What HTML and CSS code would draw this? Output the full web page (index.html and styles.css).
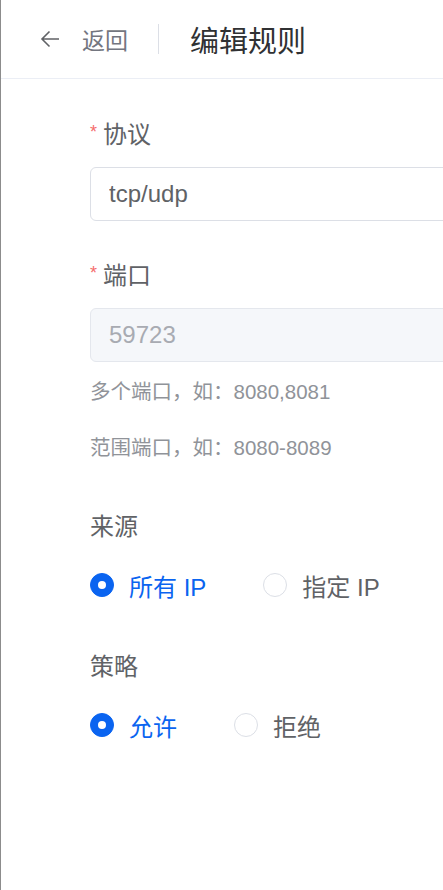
FILE: index.html
```html
<!DOCTYPE html>
<html lang="zh-CN">
<head>
    <meta charset="UTF-8">
    <meta name="viewport" content="width=device-width, initial-scale=1.0">
    <title>编辑规则</title>
    <link rel="stylesheet" href="styles.css">
</head>
<body>
    <div class="page">
        <div class="page-header">
            <a href="#" class="back-link">
                <svg class="back-icon" width="20" height="20" viewBox="0 0 20 20">
                    <path d="M19 10H2M9.5 2.5L2 10l7.5 7.5" fill="none" stroke="#606266" stroke-width="1.6"/>
                </svg>
                <span>返回</span>
            </a>
            <span class="header-divider"></span>
            <h1 class="page-title">编辑规则</h1>
        </div>

        <form class="rule-form">
            <div class="form-item">
                <label class="form-label"><span class="required">*</span>协议</label>
                <input type="text" class="form-input" value="tcp/udp">
            </div>

            <div class="form-item form-item-tips">
                <label class="form-label"><span class="required">*</span>端口</label>
                <input type="text" class="form-input" value="59723" disabled>
                <p class="form-tip">多个端口，如：8080,8081</p>
                <p class="form-tip">范围端口，如：8080-8089</p>
            </div>

            <div class="form-item form-item-radio">
                <label class="form-label">来源</label>
                <div class="radio-group">
                    <label class="radio is-checked"><span class="radio-dot"></span>所有 IP</label>
                    <label class="radio"><span class="radio-dot"></span>指定 IP</label>
                </div>
            </div>

            <div class="form-item form-item-radio">
                <label class="form-label">策略</label>
                <div class="radio-group">
                    <label class="radio is-checked"><span class="radio-dot"></span>允许</label>
                    <label class="radio"><span class="radio-dot"></span>拒绝</label>
                </div>
            </div>
        </form>
    </div>
</body>
</html>
```

FILE: styles.css
```css
html, body {
    margin: 0;
    padding: 0;
    background-color: #fff;
    overflow: hidden;
}

body {
    font-family: "Liberation Sans", "Noto Sans CJK SC", sans-serif;
    color: #606266;
}

.page {
    min-height: 890px;
    border-left: 1px solid #8c8c8c;
}

.page-header {
    display: flex;
    align-items: center;
    height: 78px;
    padding-left: 39px;
    border-bottom: 1px solid #ebeef5;
}

.back-link {
    display: flex;
    align-items: center;
    gap: 22px;
    color: #737680;
    font-size: 23px;
    text-decoration: none;
}

.back-icon {
    display: block;
}

.header-divider {
    width: 1px;
    height: 30px;
    margin: 0 31px 0 30px;
    background-color: #dcdfe6;
}

.page-title {
    margin: 0;
    font-size: 29px;
    font-weight: normal;
    color: #303133;
}

.rule-form {
    display: flex;
    flex-direction: column;
    padding: 37px 0 0 89px;
}

.form-item {
    display: flex;
    flex-direction: column;
    margin-bottom: 36px;
}

.form-item-tips {
    margin-bottom: 46px;
}

.form-item-radio {
    margin-bottom: 43px;
}

.form-label {
    display: flex;
    align-items: center;
    height: 32px;
    margin-bottom: 19px;
    font-size: 24px;
    color: #606266;
}

.required {
    color: #f56c6c;
    font-size: 18px;
    margin-right: 6px;
}

.form-input {
    width: 420px;
    height: 54px;
    padding: 0 18px;
    border: 1px solid #dcdfe6;
    border-radius: 6px;
    box-sizing: border-box;
    font-family: inherit;
    font-size: 24px;
    color: #606266;
    background-color: #fff;
    outline: none;
}

.form-input:disabled {
    background-color: #f5f7fa;
    border-color: #e4e7ed;
    color: #a8abb2;
}

.form-tip {
    margin: 16px 0 0;
    line-height: 28px;
    font-size: 20.5px;
    color: #909399;
}

.form-tip + .form-tip {
    margin-top: 28px;
}

.radio-group {
    display: flex;
    align-items: center;
    height: 40px;
    margin-top: 6px;
}

.radio {
    display: flex;
    align-items: center;
    margin-right: 57px;
    font-size: 24px;
    color: #606266;
    cursor: pointer;
}

.radio-dot {
    width: 24px;
    height: 24px;
    margin-right: 15px;
    border: 1px solid #dcdfe6;
    border-radius: 50%;
    box-sizing: border-box;
    background-color: #fff;
    position: relative;
}

.radio.is-checked {
    color: #0a64f0;
}

.radio.is-checked .radio-dot {
    background-color: #0a64f0;
    border-color: #0a64f0;
}

.radio.is-checked .radio-dot::after {
    content: "";
    position: absolute;
    left: 50%;
    top: 50%;
    width: 8px;
    height: 8px;
    margin: -4px 0 0 -4px;
    border-radius: 50%;
    background-color: #fff;
}
```
